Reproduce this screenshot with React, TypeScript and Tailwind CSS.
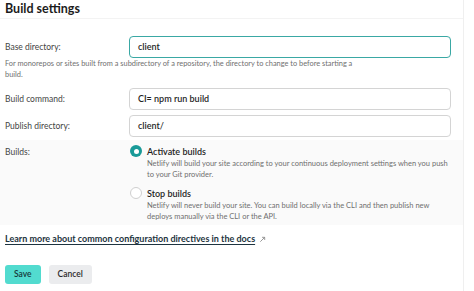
import { useState } from "react";

const font = { fontFamily: "Lato, 'Open Sans', sans-serif" };

function Field({ label, value, focused }: { label: string; value: string; focused?: boolean }) {
  return (
    <div className="flex items-center">
      <div className="w-[124px] shrink-0 text-[8.5px] text-[#444]">{label}</div>
      <div
        className={
          focused
            ? "flex h-[22px] flex-1 items-center rounded-[4px] border-[1.5px] border-[#3aa8a4] px-[8px] text-[9px] font-semibold text-[#1f1f1f]"
            : "flex h-[22px] flex-1 items-center rounded-[4px] border border-[#d4d4d4] px-[8px] text-[9px] font-semibold text-[#1f1f1f]"
        }
      >
        {value}
      </div>
    </div>
  );
}

function Radio({ checked }: { checked?: boolean }) {
  return checked ? (
    <span className="flex h-[12px] w-[12px] shrink-0 items-center justify-center rounded-full bg-[#199a98]">
      <span className="h-[5px] w-[5px] rounded-full bg-white" />
    </span>
  ) : (
    <span className="h-[12px] w-[12px] shrink-0 rounded-full border border-[#cfcfcf] bg-white" />
  );
}

export default function App() {
  const [active] = useState(true);
  return (
    <div className="h-[291px] w-[474px] bg-white" style={font}>
      <div className="h-full w-[464px] border-r border-[#efefef]">
        <h1 className="border-b border-[#f3f3f3] px-[5px] pb-[2px] pt-[1px] text-[12.5px] font-bold leading-[15px] text-[#1c1c1c]">
          Build settings
        </h1>

        <div className="pl-[5px] pr-[12px] pt-[17px]">
          <Field label="Base directory:" value="client" focused />
          <p className="text-[7.4px] leading-[11px] text-[#6f6f6f]">
            For monorepos or sites built from a subdirectory of a repository, the directory to change to before starting a
            <br />
            build.
          </p>
          <div className="mt-[8px] flex flex-col gap-[5px]">
            <Field label="Build command:" value="CI= npm run build" />
            <Field label="Publish directory:" value="client/" />
          </div>
        </div>

        <div className="mt-[3px] flex bg-[#fafafa] pb-[3px] pl-[5px] pr-[12px] pt-[5px]">
          <div className="w-[125px] shrink-0 pt-[1px] text-[8.5px] leading-[13px] text-[#444]">Builds:</div>
          <div className="flex flex-col gap-[7px]">
            <div className="flex gap-[5px]">
              <Radio checked={active} />
              <div>
                <div className="text-[9px] font-semibold leading-[13px] text-[#1f1f1f]">Activate builds</div>
                <p className="text-[7.5px] leading-[11px] text-[#6f6f6f]">
                  Netlify will build your site according to your continuous deployment settings when you push
                  <br />
                  to your Git provider.
                </p>
              </div>
            </div>
            <div className="flex gap-[5px]">
              <Radio />
              <div>
                <div className="text-[9px] font-semibold leading-[13px] text-[#1f1f1f]">Stop builds</div>
                <p className="text-[7.5px] leading-[11px] text-[#6f6f6f]">
                  Netlify will never build your site. You can build locally via the CLI and then publish new
                  <br />
                  deploys manually via the CLI or the API.
                </p>
              </div>
            </div>
          </div>
        </div>

        <div className="mt-[8px] flex h-[12px] items-center gap-[4px] px-[5px]">
          <a className="text-[9px] font-bold leading-[12px] text-[#1e3440] underline underline-offset-[2px]">
            Learn more about common configuration directives in the docs
          </a>
          <svg width="7" height="7" viewBox="0 0 8 8" className="text-[#8a8a8a]">
            <path d="M1.5 6.5 L6.5 1.5 M3.5 1.5 H6.5 V4.5" fill="none" stroke="currentColor" strokeWidth="1" />
          </svg>
        </div>

        <div className="mt-[20px] flex gap-[8px] px-[5px]">
          <button className="h-[19px] rounded-[3px] bg-[#52dbcf] px-[9px] text-[8.5px] font-semibold text-[#173b3d]">
            Save
          </button>
          <button className="h-[19px] rounded-[3px] bg-[#ebecee] px-[9px] text-[8.5px] font-semibold text-[#2b2b2b]">
            Cancel
          </button>
        </div>
      </div>
    </div>
  );
}
